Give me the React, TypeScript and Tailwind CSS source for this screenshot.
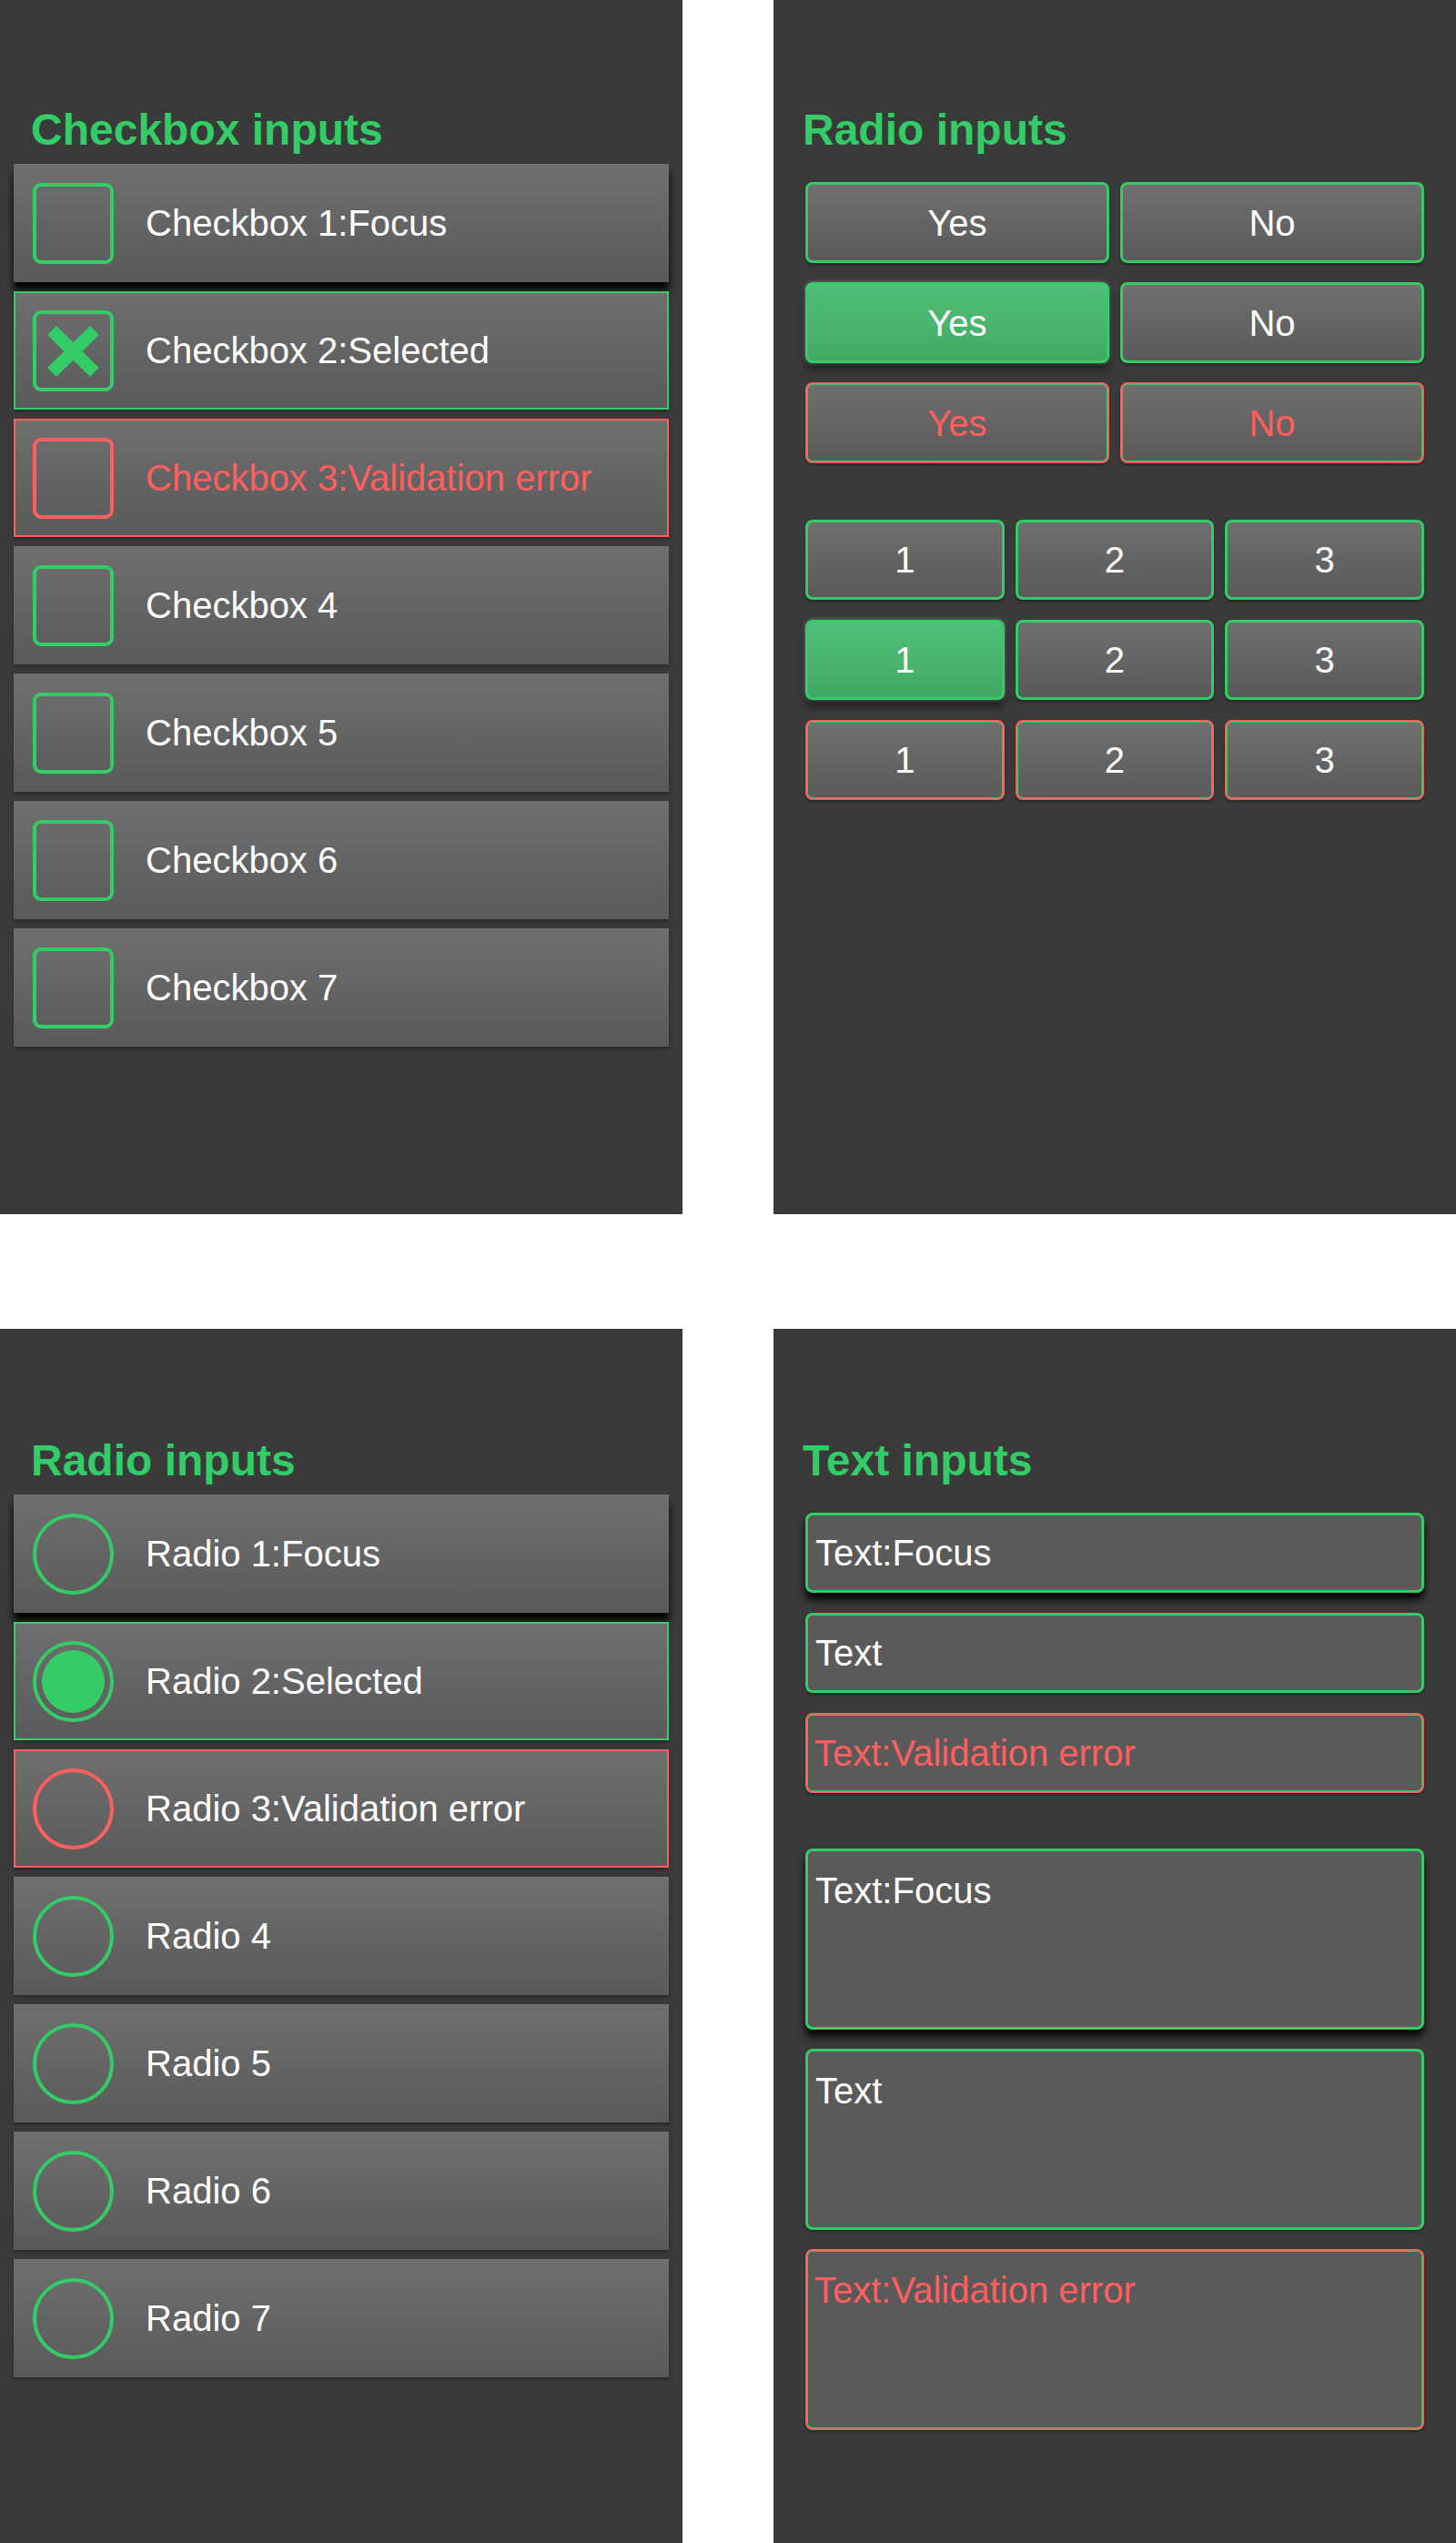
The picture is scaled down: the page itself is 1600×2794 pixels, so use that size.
import React from 'react';

const GREEN = 'border-[#33cc66]';

function Title({ children }: { children: React.ReactNode }) {
  return <h2 className="text-[48px] leading-[48px] font-bold text-[#33cc66]">{children}</h2>;
}

function CheckMark() {
  return (
    <svg width="81" height="81" viewBox="0 0 81 81" className="block">
      <line x1="17" y1="18" x2="64" y2="64" stroke="#33cc66" strokeWidth="14" />
      <line x1="64" y1="18" x2="17" y2="64" stroke="#33cc66" strokeWidth="14" />
    </svg>
  );
}

type State = 'focus' | 'selected' | 'error' | 'normal';

function rowClass(state: State) {
  const base = 'h-[130px] flex items-center pl-[21px] gap-[35px] bg-linear-to-b from-[#6f6f6f] to-[#5a5a5a]';
  if (state === 'focus') return `${base} shadow-[0_9px_8px_rgba(0,0,0,0.95)]`;
  if (state === 'selected') return `${base} shadow-[inset_0_0_0_2px_#33cc66,0_2px_3px_rgba(0,0,0,0.35)]`;
  if (state === 'error') return `${base} shadow-[inset_0_0_0_2px_#ff5f5f,0_2px_3px_rgba(0,0,0,0.35)]`;
  return `${base} shadow-[0_2px_3px_rgba(0,0,0,0.35)]`;
}

function CheckboxRow({ label, state }: { label: string; state: State }) {
  return (
    <div className={rowClass(state)}>
      <div
        className={`w-[89px] h-[89px] shrink-0 rounded-[9px] border-4 flex items-center justify-center ${
          state === 'error' ? 'border-[#ff5f5f]' : GREEN
        }`}
      >
        {state === 'selected' && <CheckMark />}
      </div>
      <span className={`text-[40px] leading-none ${state === 'error' ? 'text-[#ff5f5f]' : 'text-white'}`}>{label}</span>
    </div>
  );
}

function RadioRow({ label, state }: { label: string; state: State }) {
  return (
    <div className={rowClass(state)}>
      <div
        className={`w-[89px] h-[89px] shrink-0 rounded-full border-4 flex items-center justify-center ${
          state === 'error' ? 'border-[#ff5f5f]' : GREEN
        }`}
      >
        {state === 'selected' && <div className="w-[69px] h-[69px] rounded-full bg-[#33cc66]" />}
      </div>
      <span className="text-[40px] leading-none text-white">{label}</span>
    </div>
  );
}

function ToggleButton({ label, state, h, redText }: { label: string; state: State; h: string; redText?: boolean }) {
  let cls = 'rounded-[8px] flex items-center justify-center text-[40px] leading-none ';
  if (state === 'selected') {
    cls +=
      'border-[3px] border-[#33cc66] bg-linear-to-b from-[#52c07a] to-[#3fa963] text-white shadow-[0_0_4px_rgba(255,255,255,0.35),0_8px_8px_rgba(0,0,0,0.45)]';
  } else if (state === 'error') {
    cls += `border-2 border-[#ff5f5f] bg-linear-to-b from-[#6f6f6f] to-[#5a5a5a] shadow-[inset_0_0_0_1px_#33cc66,0_2px_3px_rgba(0,0,0,0.35)] ${
      redText ? 'text-[#ff5f5f]' : 'text-white'
    }`;
  } else {
    cls +=
      'border-[3px] border-[#33cc66] bg-linear-to-b from-[#6f6f6f] to-[#5a5a5a] text-white shadow-[0_2px_3px_rgba(0,0,0,0.35)]';
  }
  return <div className={`${cls} ${h}`}>{label}</div>;
}

function TextField({ label, state, multi }: { label: string; state: State; multi?: boolean }) {
  let cls = 'bg-[#5a5a5a] rounded-[8px] text-[40px] pl-[8px] ';
  cls += multi ? 'h-[199px] pt-[20px] leading-[46px] ' : 'h-[88px] flex items-center leading-none ';
  if (state === 'focus') cls += 'border-[3px] border-[#33cc66] text-white shadow-[0_8px_8px_rgba(0,0,0,0.9)]';
  else if (state === 'error')
    cls += 'border-2 border-[#ff5f5f] text-[#ff5f5f] shadow-[inset_0_0_0_1px_#33cc66,0_2px_3px_rgba(0,0,0,0.35)]';
  else cls += 'border-[3px] border-[#33cc66] text-white shadow-[0_2px_3px_rgba(0,0,0,0.3)]';
  return <div className={cls}>{label}</div>;
}

export default function App() {
  const checkboxes: { label: string; state: State }[] = [
    { label: 'Checkbox 1:Focus', state: 'focus' },
    { label: 'Checkbox 2:Selected', state: 'selected' },
    { label: 'Checkbox 3:Validation error', state: 'error' },
    { label: 'Checkbox 4', state: 'normal' },
    { label: 'Checkbox 5', state: 'normal' },
    { label: 'Checkbox 6', state: 'normal' },
    { label: 'Checkbox 7', state: 'normal' },
  ];
  const radios: { label: string; state: State }[] = [
    { label: 'Radio 1:Focus', state: 'focus' },
    { label: 'Radio 2:Selected', state: 'selected' },
    { label: 'Radio 3:Validation error', state: 'error' },
    { label: 'Radio 4', state: 'normal' },
    { label: 'Radio 5', state: 'normal' },
    { label: 'Radio 6', state: 'normal' },
    { label: 'Radio 7', state: 'normal' },
  ];
  const rows: State[] = ['normal', 'selected', 'error'];

  return (
    <div className="w-[1600px] bg-white grid grid-cols-[750px_750px] gap-x-[100px] gap-y-[126px] font-['Liberation_Sans',Arial,sans-serif]">
      {/* checkbox list */}
      <section className="h-[1334px] bg-[#3a3a3a] px-[15px] pt-[119px]">
        <div className="pl-[19px]">
          <Title>Checkbox inputs</Title>
        </div>
        <div className="mt-[13px] flex flex-col gap-[10px]">
          {checkboxes.map((c) => (
            <CheckboxRow key={c.label} {...c} />
          ))}
        </div>
      </section>

      {/* radio buttons */}
      <section className="h-[1334px] bg-[#3a3a3a] px-[35px] pt-[119px]">
        <div className="-ml-[3px]">
          <Title>Radio inputs</Title>
        </div>
        <div className="mt-[33px] grid grid-cols-2 gap-x-[12px] gap-y-[21px]">
          {rows.map((s) => (
            <React.Fragment key={s}>
              <ToggleButton label="Yes" state={s} h="h-[89px]" redText />
              <ToggleButton label="No" state={s === 'selected' ? 'normal' : s} h="h-[89px]" redText />
            </React.Fragment>
          ))}
        </div>
        <div className="mt-[62px] grid grid-cols-3 gap-x-[12px] gap-y-[22px]">
          {rows.map((s) => (
            <React.Fragment key={s}>
              <ToggleButton label="1" state={s} h="h-[88px]" />
              <ToggleButton label="2" state={s === 'selected' ? 'normal' : s} h="h-[88px]" />
              <ToggleButton label="3" state={s === 'selected' ? 'normal' : s} h="h-[88px]" />
            </React.Fragment>
          ))}
        </div>
      </section>

      {/* radio list */}
      <section className="h-[1334px] bg-[#3a3a3a] px-[15px] pt-[121px]">
        <div className="pl-[19px]">
          <Title>Radio inputs</Title>
        </div>
        <div className="mt-[13px] flex flex-col gap-[10px]">
          {radios.map((r) => (
            <RadioRow key={r.label} {...r} />
          ))}
        </div>
      </section>

      {/* text fields */}
      <section className="h-[1334px] bg-[#3a3a3a] px-[35px] pt-[121px]">
        <div className="-ml-[3px]">
          <Title>Text inputs</Title>
        </div>
        <div className="mt-[33px] flex flex-col gap-[22px]">
          <TextField label="Text:Focus" state="focus" />
          <TextField label="Text" state="normal" />
          <TextField label="Text:Validation error" state="error" />
        </div>
        <div className="mt-[61px] flex flex-col gap-[21px]">
          <TextField label="Text:Focus" state="focus" multi />
          <TextField label="Text" state="normal" multi />
          <TextField label="Text:Validation error" state="error" multi />
        </div>
      </section>
    </div>
  );
}
